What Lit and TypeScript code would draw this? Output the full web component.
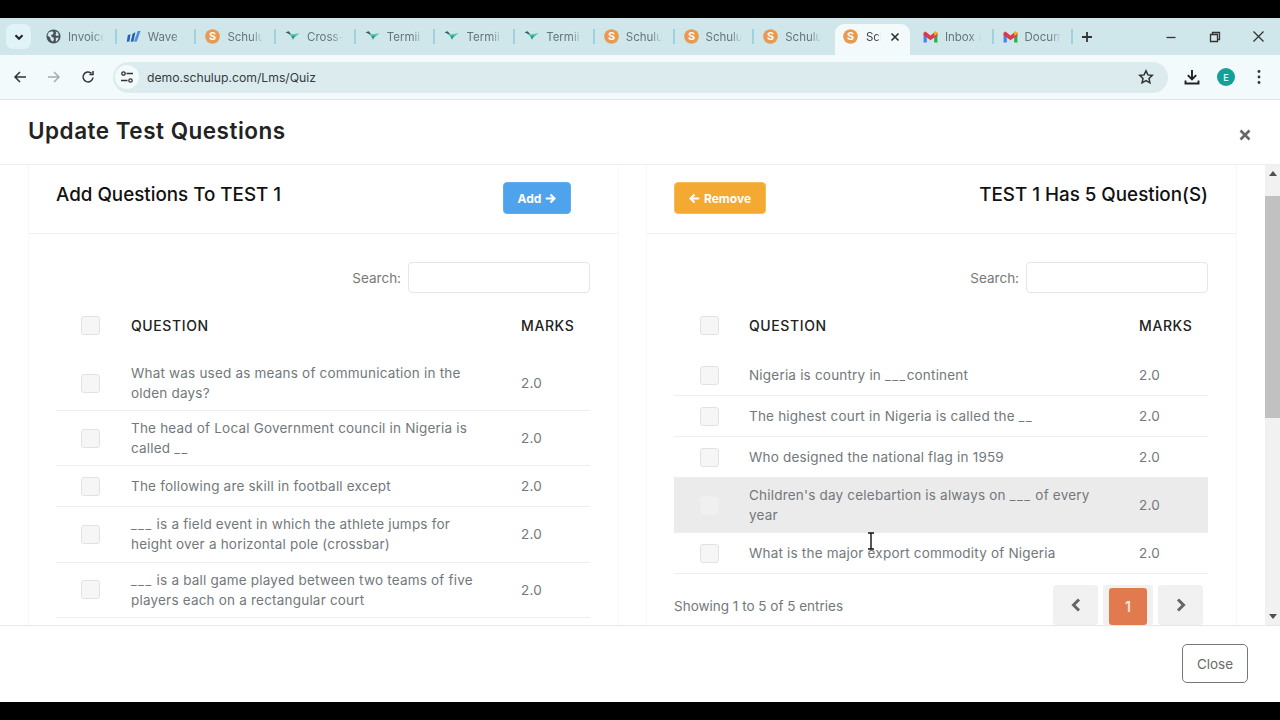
import { LitElement, html, css, svg } from 'lit';
import { customElement } from 'lit/decorators.js';

const globe = html`<svg class="fav" viewBox="0 0 16 16">
  <circle cx="8" cy="8" r="7.500" fill="#47525c"></circle>
  <path d="M3 3.500l3.500-1 1.500 1-.5 2-2 1 .5 2 2 .5.5 2.500-1.500 2-2-2-.5-2.500L1.500 7zM10 2.500l3 1.500.5 3-2 .5-1.500-1.500 1-1.500zM10.500 9.500l3-.5-1 3-2 1.500z" fill="#d4e8ec"></path>
</svg>`;

const wave = html`<svg class="fav" viewBox="0 0 16 16">
  <path d="M2 6.500l2.800-1-1.200 7.800-2.800.4zM7 5l3-1.500-2 9.800-3 .4z" fill="#2a5fb8"></path>
  <path d="M12.500 2.200L15.500 2l-4 11.300-3 .4z" fill="#4a8fe0"></path>
</svg>`;

const schulup = html`<svg class="fav" viewBox="0 0 16 16">
  <circle cx="8" cy="8" r="7.800" fill="#ea9a4e"></circle>
  <text x="8" y="12" text-anchor="middle" font-size="11.500" font-weight="700" font-family="Inter, sans-serif" fill="#fff">S</text>
</svg>`;

const termii = html`<svg class="fav" viewBox="0 0 16 16">
  <path d="M0.500 3.500l3.500-1 3.500 4.500z" fill="#35566b"></path>
  <path d="M4 6l11.500-1.500L10 9z" fill="#55c8a6"></path>
  <path d="M6.500 7.500L11 7l-2.500 4.500z" fill="#2a9d7f"></path>
</svg>`;

const gmail = html`<svg class="fav gm" viewBox="0 0 16 13">
  <path d="M0.500 3v9.500H4V5z" fill="#4285f4"></path>
  <path d="M12 5v7.500h3.500V3z" fill="#34a853"></path>
  <path d="M0.500 2V4.500L8 10l7.500-5.500V2L13.500 0.500 8 5 2.500 0.500z" fill="#e0394b"></path>
  <path d="M12 1.700v3.800L15.500 3V2L13.700 0.500z" fill="#f5b60a"></path>
</svg>`;

const tabs = [
  { icon: globe, label: 'Invoice' },
  { icon: wave, label: 'Wave -' },
  { icon: schulup, label: 'Schulup' },
  { icon: termii, label: 'Cross-c' },
  { icon: termii, label: 'Termii -' },
  { icon: termii, label: 'Termii -' },
  { icon: termii, label: 'Termii -' },
  { icon: schulup, label: 'Schulup' },
  { icon: schulup, label: 'Schulup' },
  { icon: schulup, label: 'Schulup' },
  { icon: schulup, label: 'Schulup', active: true },
  { icon: gmail, label: 'Inbox (' },
  { icon: gmail, label: 'Docum' },
];

const available = [
  'What was used as means of communication in the\nolden days?',
  'The head of Local Government council in Nigeria is\ncalled __',
  'The following are skill in football except',
  '___ is a field event in which the athlete jumps for\nheight over a horizontal pole (crossbar)',
  '___ is a ball game played between two teams of five\nplayers each on a rectangular court',
  'Which of these is a racket game',
];

const assigned = [
  'Nigeria is country in ___continent',
  'The highest court in Nigeria is called the __',
  'Who designed the national flag in 1959',
  "Children's day celebartion is always on ___ of every\nyear",
  'What is the major export commodity of Nigeria',
];

const arrowR = svg`<path d="M1 7h10.500M7 2L12 7 7 12" fill="none" stroke="currentColor" stroke-width="2.800"></path>`;
const arrowL = svg`<path d="M13 7H2.500M7 2L2 7l5 5" fill="none" stroke="currentColor" stroke-width="2.800"></path>`;

@customElement('app-root')
export class AppRoot extends LitElement {
  static styles = css`
    :host {
      display: flex;
      flex-direction: column;
      width: 1280px;
      height: 720px;
      overflow: hidden;
      background: #000;
      font-family: Inter, 'Noto Sans', sans-serif;
      color: #222;
    }
    .strip {
      display: flex;
      align-items: flex-end;
      height: 37px;
      margin-top: 18px;
      background: #cfe6ea;
      flex: none;
    }
    .tablist-btn {
      display: flex;
      align-items: center;
      justify-content: center;
      width: 25px;
      height: 25px;
      margin: 0 5px 6px 6px;
      border-radius: 7px;
      background: #e0f3f6;
      flex: none;
    }
    .tab {
      display: flex;
      align-items: center;
      gap: 7px;
      box-sizing: border-box;
      width: 79.700px;
      height: 31px;
      padding: 0 0 6px 10px;
      flex: none;
      position: relative;
      font-size: 11.500px;
      color: #66757b;
    }
    .tab.sep::after {
      content: '';
      position: absolute;
      right: -1px;
      top: 5px;
      width: 2px;
      height: 15px;
      background: #9fd2de;
    }
    .tab.active {
      background: #f3fafb;
      border-radius: 9px 9px 0 0;
      width: 75px;
      margin: 0 3px 0 2px;
      padding-left: 8px;
      gap: 8px;
      color: #444;
    }
    .fav {
      width: 15px;
      height: 15px;
      flex: none;
    }
    .fav.gm {
      height: 12px;
    }
    .tab-label {
      width: 36px;
      overflow: hidden;
      white-space: nowrap;
      -webkit-mask-image: linear-gradient(90deg, #000 70%, transparent);
      mask-image: linear-gradient(90deg, #000 70%, transparent);
    }
    .active .tab-label {
      width: 15px;
      margin-right: 1px;
    }
    .tab-x {
      width: 10px;
      height: 10px;
      flex: none;
    }
    .newtab {
      width: 30px;
      height: 25px;
      margin: 0 0 6px 0;
      display: flex;
      align-items: center;
      justify-content: center;
      flex: none;
    }
    .win {
      margin-left: auto;
      display: flex;
      align-self: stretch;
    }
    .win span {
      width: 43.500px;
      display: flex;
      align-items: center;
      justify-content: center;
    }
    .toolbar {
      display: flex;
      align-items: center;
      height: 44px;
      background: #f3fafb;
      border-bottom: 1px solid #dfe5e7;
      flex: none;
    }
    .nav {
      width: 34px;
      display: flex;
      justify-content: center;
      flex: none;
    }
    .nav:first-child {
      margin-left: 3px;
    }
    .omni {
      display: flex;
      align-items: center;
      width: 1055px;
      height: 31px;
      margin-left: 8px;
      border-radius: 16px;
      background: #dcebee;
      flex: none;
      font-size: 12.200px;
      color: #333d40;
    }
    .tune {
      display: flex;
      align-items: center;
      justify-content: center;
      width: 24px;
      height: 24px;
      margin: 0 8px 0 2px;
      border-radius: 50%;
      background: #f3fafb;
    }
    .star {
      margin-left: auto;
      margin-right: 14px;
      display: flex;
    }
    .tool {
      display: flex;
      justify-content: center;
      align-items: center;
      flex: none;
    }
    .tool.dl {
      width: 48px;
    }
    .tool.more {
      width: 48px;
    }
    .avatar {
      width: 18px;
      height: 18px;
      margin-left: 1px;
      border-radius: 50%;
      background: #13a096;
      color: #e6f7f5;
      font-size: 9px;
      font-weight: 600;
    }
    .modal {
      display: flex;
      flex-direction: column;
      height: 602px;
      background: #fff;
      flex: none;
    }
    .modal-head {
      display: flex;
      justify-content: space-between;
      box-sizing: border-box;
      height: 65px;
      padding: 17px 28px 0;
      border-bottom: 1px solid #eeeeee;
      flex: none;
    }
    h1 {
      margin: 0;
      font-size: 22.500px;
      line-height: 28px;
      font-weight: 600;
      letter-spacing: 0.500px;
      color: #222;
    }
    .x {
      margin: 12px 0 0 0;
      position: relative;
      left: -1px;
    }
    .modal-body {
      display: flex;
      height: 460px;
      overflow: hidden;
      flex: none;
    }
    .panels {
      display: grid;
      grid-template-columns: 591px 591px;
      gap: 27px;
      padding-left: 28px;
      flex: 1;
      align-items: start;
    }
    .panel {
      box-sizing: border-box;
      height: 500px;
      border: 1px solid #f8f8f8;
      border-top: 0;
    }
    .panel-head {
      display: flex;
      justify-content: space-between;
      box-sizing: border-box;
      height: 69px;
      padding: 17px 29px 0 27px;
      border-bottom: 1px solid #f0f0f0;
    }
    .panel-head.right {
      padding-right: 28px;
    }
    h2 {
      margin: 0;
      font-size: 18.800px;
      line-height: 26px;
      font-weight: 500;
      color: #111;
    }
    .btn {
      display: flex;
      align-items: center;
      justify-content: center;
      gap: 4px;
      box-sizing: border-box;
      height: 32px;
      border-radius: 4px;
      color: #fff;
      font-size: 12px;
      font-weight: 700;
    }
    .btn svg {
      width: 11px;
      height: 11px;
    }
    .add {
      width: 68px;
      margin-right: 18px;
      background: #4fa3ec;
      border: 1px solid #60acee;
    }
    .remove {
      width: 92px;
      background: #f4a933;
      border: 1px solid #f8bd55;
    }
    .inner {
      padding: 28px 28px 0 27px;
    }
    .search {
      display: flex;
      justify-content: flex-end;
      align-items: center;
      gap: 7px;
      font-size: 13.500px;
      color: #777;
    }
    .search i {
      display: block;
      box-sizing: border-box;
      width: 182px;
      height: 31px;
      border: 1px solid #e6e6e6;
      border-radius: 4px;
    }
    .row {
      display: grid;
      grid-template-columns: 75px 390px 1fr;
      align-items: center;
      box-sizing: border-box;
      min-height: 41px;
      padding: 7px 0;
      border-bottom: 1px solid #eeeeee;
      font-size: 13.500px;
      line-height: 20px;
      letter-spacing: 0.200px;
      color: #72787c;
    }
    .row.head {
      height: 62px;
      padding: 3px 0 0 0;
      border-bottom: 0;
      color: #222;
      font-size: 14px;
      font-weight: 500;
      letter-spacing: 0.600px;
    }
    .left .row {
      padding: 7.100px 0;
    }
    .left .row.head {
      height: 63px;
      padding: 2px 0 0 0;
    }
    .row.hl {
      background: #ebebeb;
    }
    .text {
      white-space: pre-line;
    }
    .blank {
      font-size: 12.500px;
      line-height: 0;
      letter-spacing: 1.500px;
    }
    .check {
      display: block;
      box-sizing: border-box;
      width: 19px;
      height: 19px;
      margin-left: 25px;
      border: 1px solid #e2e2e2;
      border-radius: 3px;
      background: #f6f6f6;
    }
    .right-table .check {
      margin-left: 26px;
    }
    .hl .check {
      border-color: #efefef;
      background: #f0f0f0;
    }
    .foot {
      display: flex;
      justify-content: space-between;
      padding: 11px 5px 0 0;
      font-size: 13.500px;
      color: #72787c;
    }
    .foot > span {
      padding-top: 13px;
    }
    .pager {
      display: flex;
      gap: 5px;
    }
    .page {
      display: flex;
      align-items: center;
      justify-content: center;
      width: 45px;
      height: 40px;
      border-radius: 3px;
      background: #f1f1f1;
    }
    .page.num {
      width: 50px;
      padding: 3px 6px 0;
      box-sizing: border-box;
      align-items: stretch;
    }
    .page.num b {
      display: flex;
      flex: 1;
      align-items: center;
      justify-content: center;
      height: 37px;
      border-radius: 3px;
      background: #e27a50;
      color: #fde9dc;
      font-size: 14px;
      font-weight: 600;
    }
    .scroll {
      display: flex;
      flex-direction: column;
      align-items: center;
      width: 15px;
      background: #f1f1f1;
      flex: none;
    }
    .scroll u {
      display: block;
      width: 0;
      height: 0;
      margin-top: 6px;
      border: 4px solid transparent;
      border-top: 0;
      border-bottom: 5px solid #505050;
    }
    .scroll u.down {
      margin: auto 0 6px;
      border-top: 5px solid #505050;
      border-bottom: 0;
    }
    .scroll s {
      display: block;
      width: 15px;
      height: 222px;
      margin-top: 20px;
      background: #c1c1c1;
    }
    .modal-foot {
      display: flex;
      justify-content: flex-end;
      box-sizing: border-box;
      height: 77px;
      padding: 18px 32px 0 0;
      border-top: 1px solid #e8e8e8;
      flex: none;
    }
    .close {
      display: flex;
      align-items: center;
      justify-content: center;
      box-sizing: border-box;
      width: 66px;
      height: 39px;
      border: 1px solid #777;
      border-radius: 5px;
      font-size: 13.500px;
      color: #6a6a6a;
    }
    .cursor {
      position: absolute;
      left: 866px;
      top: 532px;
      width: 10px;
      height: 18px;
    }
  `;

  // the underscores in the question text are spaced out like dashes
  private renderText(text: string) {
    return text.split(/(_+)/).map((part) => (part.startsWith('_') ? html`<span class="blank">${part}</span>` : part));
  }

  private renderRow(text: string, hl = false) {
    return html`<div class="row ${hl ? 'hl' : ''}">
      <span class="check"></span>
      <span class="text">${this.renderText(text)}</span>
      <span>2.0</span>
    </div>`;
  }

  private renderTable(rows: string[], hlIndex = -1) {
    return html`
      <div class="search">Search: <i></i></div>
      <div class="row head">
        <span class="check"></span>
        <span>QUESTION</span>
        <span>MARKS</span>
      </div>
      ${rows.map((r, i) => this.renderRow(r, i === hlIndex))}
    `;
  }

  render() {
    return html`
      <div class="strip">
        <div class="tablist-btn">
          <svg width="10" height="10" viewBox="0 0 10 10"><path d="M1.500 3.200L5 6.800l3.500-3.600" fill="none" stroke="#222" stroke-width="2"></path></svg>
        </div>
        ${tabs.map(
          (t, i) => html`<div class="tab ${t.active ? 'active' : ''} ${!t.active && i !== 9 ? 'sep' : ''}">
            ${t.icon}
            <span class="tab-label">${t.label}</span>
            ${t.active
              ? html`<svg class="tab-x" viewBox="0 0 10 10"><path d="M1.500 1.500l7 7M8.500 1.500l-7 7" stroke="#333" stroke-width="1.700"></path></svg>`
              : ''}
          </div>`,
        )}
        <div class="newtab">
          <svg width="12" height="12" viewBox="0 0 12 12"><path d="M6 1v10M1 6h10" stroke="#333" stroke-width="1.800"></path></svg>
        </div>
        <div class="win">
          <span><svg width="12" height="12" viewBox="0 0 12 12"><path d="M1.500 6.500h9" stroke="#333" stroke-width="1.300"></path></svg></span>
          <span><svg width="12" height="12" viewBox="0 0 12 12"><path d="M1.500 3.500h7v7h-7zM3.500 3.500v-2h7v7h-2" fill="none" stroke="#333" stroke-width="1.300"></path></svg></span>
          <span><svg width="13" height="13" viewBox="0 0 13 13"><path d="M1.500 1.500l10 10M11.500 1.500l-10 10" stroke="#333" stroke-width="1.300"></path></svg></span>
        </div>
      </div>

      <div class="toolbar">
        <span class="nav"><svg width="14" height="14" viewBox="0 0 14 14"><path d="M13 7H2M7 2L2 7l5 5" fill="none" stroke="#333" stroke-width="1.500"></path></svg></span>
        <span class="nav"><svg width="14" height="14" viewBox="0 0 14 14"><path d="M1 7h11M7 2l5 5-5 5" fill="none" stroke="#a3adb0" stroke-width="1.500"></path></svg></span>
        <span class="nav"><svg width="14" height="14" viewBox="0 0 14 14"><path d="M12 7.500A5 5 0 1 1 10.500 3.300M12 1v3.600H8.400" fill="none" stroke="#333" stroke-width="1.500"></path></svg></span>
        <div class="omni">
          <span class="tune"><svg width="14" height="14" viewBox="0 0 14 14"><circle cx="3.500" cy="3.500" r="1.700" fill="none" stroke="#333" stroke-width="1.300"></circle><path d="M6.500 3.500H13M1 10.500h6.500" stroke="#333" stroke-width="1.300"></path><circle cx="10.500" cy="10.500" r="1.700" fill="none" stroke="#333" stroke-width="1.300"></circle></svg></span>
          demo.schulup.com/Lms/Quiz
          <span class="star"><svg width="16" height="16" viewBox="0 0 16 16"><path d="M8 1.800l1.900 4.100 4.400.5-3.300 3 .9 4.400L8 11.600l-3.900 2.200.9-4.400-3.300-3 4.400-.5z" fill="none" stroke="#333" stroke-width="1.500"></path></svg></span>
        </div>
        <span class="tool dl"><svg width="16" height="16" viewBox="0 0 16 16"><path d="M8 1v9M3.800 6.200L8 10.500l4.200-4.300M1.500 11.500v3h13v-3" fill="none" stroke="#222" stroke-width="1.900"></path></svg></span>
        <span class="tool avatar">E</span>
        <span class="tool more"><svg width="4" height="16" viewBox="0 0 4 16"><circle cx="2" cy="2.500" r="1.400" fill="#333"></circle><circle cx="2" cy="8" r="1.400" fill="#333"></circle><circle cx="2" cy="13.500" r="1.400" fill="#333"></circle></svg></span>
      </div>

      <div class="modal">
        <div class="modal-head">
          <h1>Update Test Questions</h1>
          <svg class="x" width="12" height="12" viewBox="0 0 12 12"><path d="M1.500 1.500l9 9M10.500 1.500l-9 9" stroke="#666" stroke-width="2.600"></path></svg>
        </div>
        <div class="modal-body">
          <div class="panels">
            <section class="panel">
              <div class="panel-head">
                <h2>Add Questions To TEST 1</h2>
                <div class="btn add">Add <svg viewBox="0 0 14 14">${arrowR}</svg></div>
              </div>
              <div class="inner left">${this.renderTable(available)}</div>
            </section>
            <section class="panel">
              <div class="panel-head right">
                <div class="btn remove"><svg viewBox="0 0 14 14">${arrowL}</svg> Remove</div>
                <h2>TEST 1 Has 5 Question(S)</h2>
              </div>
              <div class="inner right-table">
                ${this.renderTable(assigned, 3)}
                <div class="foot">
                  <span>Showing 1 to 5 of 5 entries</span>
                  <div class="pager">
                    <div class="page"><svg width="12" height="14" viewBox="0 0 12 14"><path d="M9 1.500L3.500 7 9 12.500" fill="none" stroke="#666" stroke-width="3"></path></svg></div>
                    <div class="page num"><b>1</b></div>
                    <div class="page"><svg width="12" height="14" viewBox="0 0 12 14"><path d="M3 1.500L8.500 7 3 12.500" fill="none" stroke="#666" stroke-width="3"></path></svg></div>
                  </div>
                </div>
              </div>
            </section>
          </div>
          <div class="scroll"><u></u><s></s><u class="down"></u></div>
        </div>
        <div class="modal-foot"><div class="close">Close</div></div>
      </div>

      <svg class="cursor" viewBox="0 0 10 18"><path d="M2 1h6M5 1v16M2 17h6" fill="none" stroke="#111" stroke-width="1.400"></path></svg>
    `;
  }
}
